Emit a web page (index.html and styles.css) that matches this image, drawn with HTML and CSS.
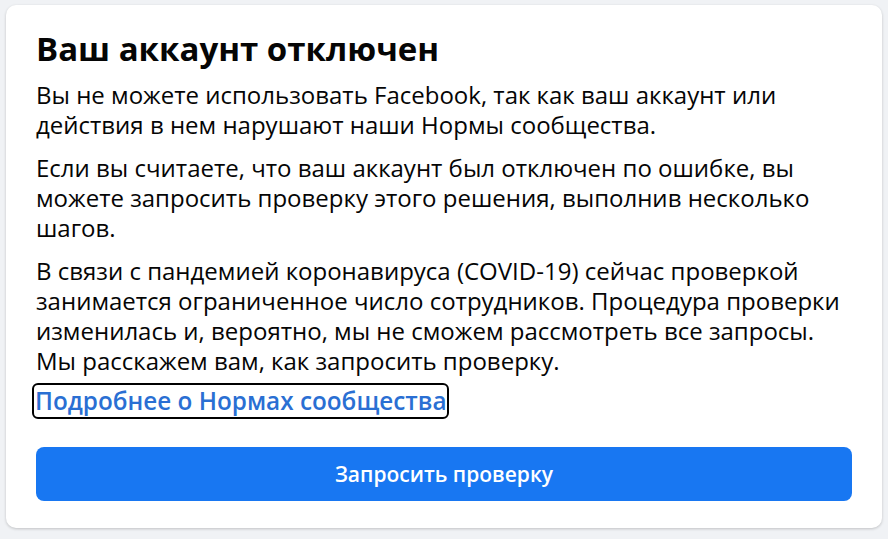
FILE: index.html
```html
<!DOCTYPE html>
<html lang="ru">
<head>
<meta charset="utf-8">
<link rel="stylesheet" href="styles.css">
</head>
<body>
<div class="card">
  <h1 class="title">Ваш аккаунт отключен</h1>
  <p class="text">Вы не можете использовать Facebook, так как ваш аккаунт или действия в нем нарушают наши Нормы сообщества.</p>
  <p class="text">Если вы считаете, что ваш аккаунт был отключен по ошибке, вы можете запросить проверку этого решения, выполнив несколько шагов.</p>
  <p class="text">В связи с пандемией коронавируса (COVID-19) сейчас проверкой занимается ограниченное число сотрудников. Процедура проверки изменилась и, вероятно, мы не сможем рассмотреть все запросы. Мы расскажем вам, как запросить проверку.</p>
  <div class="link-row"><a class="link" href="#">Подробнее о Нормах сообщества</a></div>
  <button class="btn">Запросить проверку</button>
</div>
</body>
</html>
```
FILE: styles.css
```css
html, body {
  margin: 0;
  padding: 0;
  background: #f0f2f5;
}
body {
  padding: 5px 6px;
  font-family: "Open Sans", "Noto Sans", sans-serif;
  color: #1c1e21;
}
.card {
  background: #fff;
  border-radius: 10px;
  box-shadow: 0 1px 3px rgba(0,0,0,0.2);
  padding: 26px 30px 28px;
  height: 523px;
  box-sizing: border-box;
}
.title {
  margin: 0 0 2px;
  font-size: 33px;
  font-weight: 700;
  line-height: 36px;
  color: #050505;
}
.text {
  margin: 13px 0 0;
  font-size: 24px;
  line-height: 30px;
  color: #050505;
}
.link-row {
  margin-top: 9px;
}
.link {
  display: inline-block;
  color: #2a6fd3;
  text-decoration: none;
  font-size: 24.3px;
  font-weight: 600;
  line-height: 32px;
  outline: 2px solid #000;
  border-radius: 4px;
  padding: 0 1px;
  margin-left: -2px;
}
.btn {
  display: block;
  width: 100%;
  margin-top: 30px;
  height: 54px;
  border: none;
  border-radius: 8px;
  background: #1877f2;
  color: #fff;
  font-family: inherit;
  font-size: 21px;
  font-weight: 600;
}
```
